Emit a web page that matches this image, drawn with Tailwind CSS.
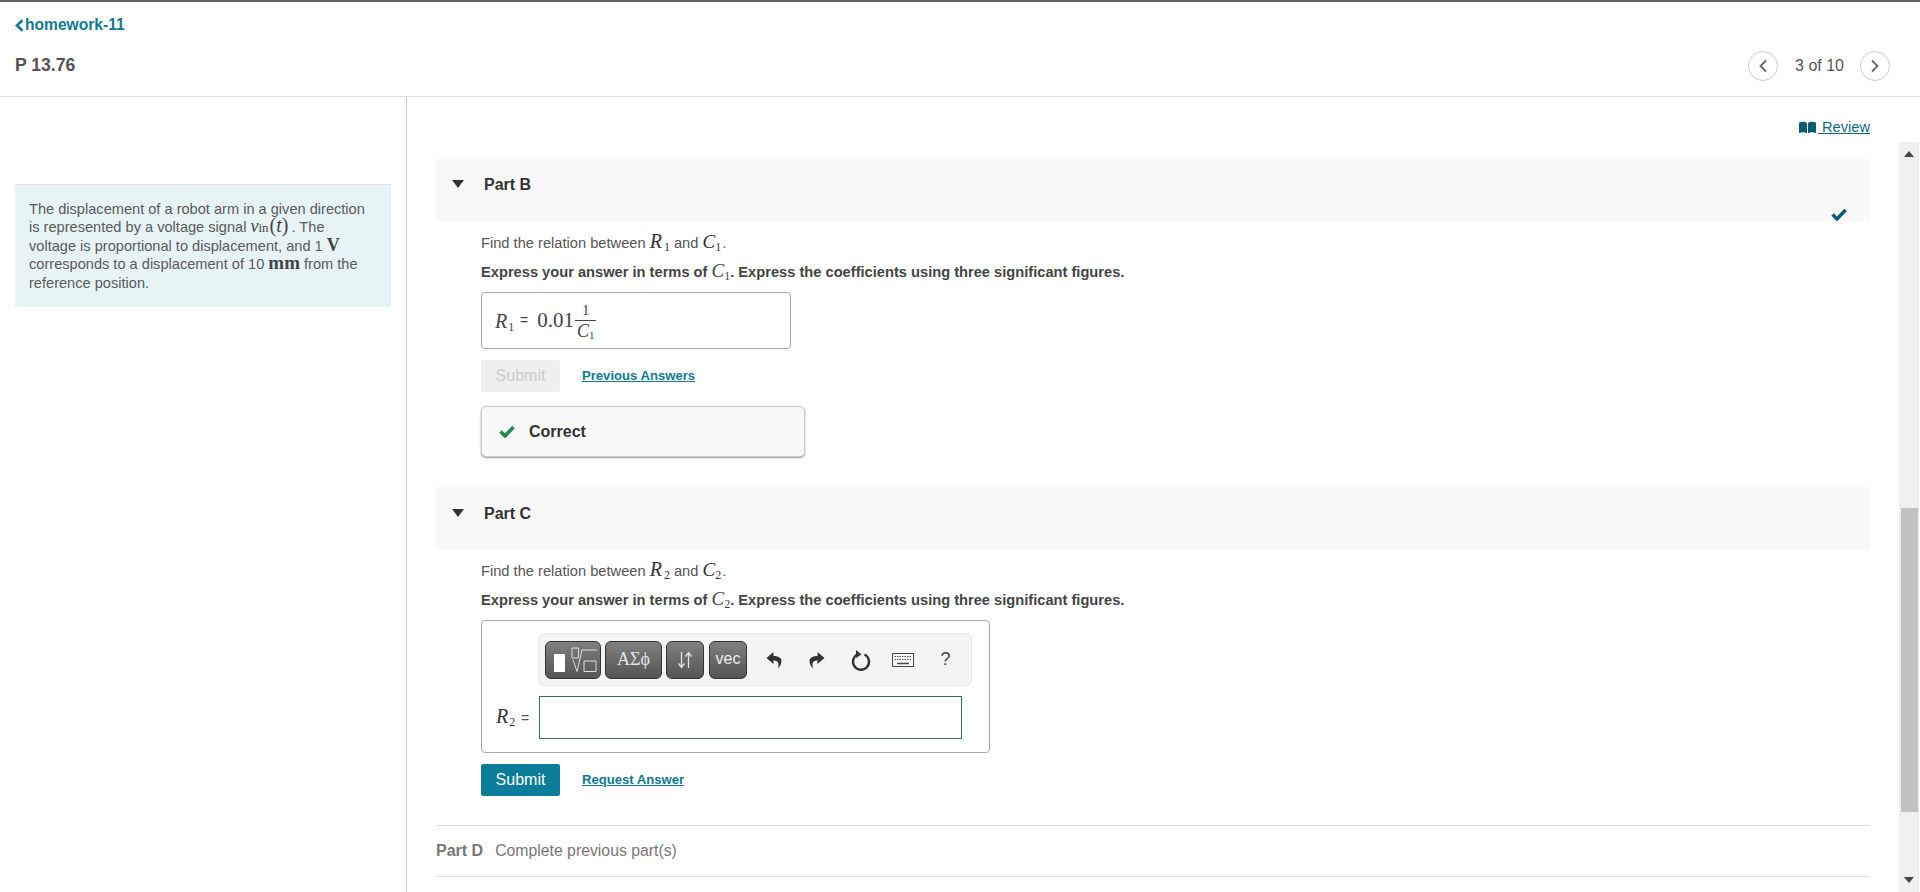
<!DOCTYPE html>
<html lang="en">
<head>
<meta charset="UTF-8" />
<title>P 13.76</title>
<script src="https://cdn.jsdelivr.net/npm/@tailwindcss/browser@4"></script>
</head>
<body class="h-[892px] overflow-hidden bg-white font-['Liberation_Sans',sans-serif] text-[#555]">

<!-- Top bar -->
<header class="h-[97px] border-t-2 border-b border-t-[#666] border-b-[#ddd] flex justify-between">
  <div class="pl-[15px]">
    <a href="#" class="flex items-center h-[16px] mt-[15px] text-[15.6px] font-bold text-[#0f7a90]">
      <svg width="9" height="13" viewBox="0 0 9 13" class="mr-[1px]"><path d="M7.5 1.2 2 6.5l5.5 5.3" fill="none" stroke="#0f7a90" stroke-width="2.6"/></svg>homework-11
    </a>
    <h1 class="mt-[22px] text-[17.6px] leading-[20px] font-bold text-[#555]">P 13.76</h1>
  </div>
  <div class="flex items-center mt-[49px] h-[30px] pr-[30px] text-[16px]">
    <button class="w-[30px] h-[30px] rounded-full border border-[#ccc] flex items-center justify-center">
      <svg width="10" height="14" viewBox="0 0 10 14"><path d="M8 1.5 2.500 7 8 12.500" fill="none" stroke="#666" stroke-width="1.800"/></svg>
    </button>
    <span class="ml-[17px] mr-[16px] text-[#555]">3 of 10</span>
    <button class="w-[30px] h-[30px] rounded-full border border-[#ccc] flex items-center justify-center">
      <svg width="10" height="14" viewBox="0 0 10 14"><path d="M2 1.5 7.500 7 2 12.500" fill="none" stroke="#666" stroke-width="1.800"/></svg>
    </button>
  </div>
</header>

<div class="flex h-[795px]">
  <!-- Intro panel -->
  <aside class="w-[407px] shrink-0 border-r border-[#ccc] pt-[87px] pl-[15px]">
    <div class="w-[376px] h-[123px] bg-[#e6f4f6] border-t border-[#d5e6e9] pl-[14px] pt-[15px] text-[14.6px] leading-[18.4px] text-[#5a5a5a]">
      The displacement of a robot arm in a given direction<br>
      is represented by a voltage signal <span class="font-['Liberation_Serif',serif] text-[18px] leading-[0] text-[#444]"><i>v</i><span class="text-[13px] leading-[0]">in</span><span class="ml-[1px] text-[20px] leading-[0]">(<i>t</i>)</span></span><span class="ml-[3px]">. The</span><br>
      voltage is proportional to displacement, and 1 <span class="font-['Liberation_Serif',serif] text-[18px] leading-[0] font-bold text-[#444]">V</span><br>
      corresponds to a displacement of 10 <span class="font-['Liberation_Serif',serif] text-[19px] leading-[0] font-bold text-[#444]">mm</span> from the<br>
      reference position.
    </div>
  </aside>

  <!-- Parts column -->
  <main class="flex-1 flex">
    <div class="w-[1463px] pl-[29px] shrink-0">
      <div class="h-[62px] flex justify-end pt-[21px]">
        <a href="#" class="flex items-start h-[18px] text-[14.67px] leading-[18px] text-[#0f6a80] underline">
          <svg width="17" height="13" viewBox="0 0 17 13" class="mt-[3px] mr-[2px]"><path d="M0 1.500C3 .5 6 .5 8 2v10.500C6 11 3 11 0 12zM17 1.500C14 .5 11 .5 9 2v10.500C11 11 14 11 17 12z" fill="#0b5b72"/></svg>
          <span>&nbsp;Review</span>
        </a>
      </div>

      <!-- Part B -->
      <section>
        <div class="relative h-[62px] bg-[#f9f9f9] flex pt-[16px] pl-[16px]">
          <svg width="12" height="8" viewBox="0 0 12 8" class="mt-[5px]"><path d="M0 0h12L6 8z" fill="#333"/></svg>
          <h2 class="ml-[20px] text-[16px] leading-[20px] font-bold text-[#333]">Part B</h2>
          <svg width="16" height="13" viewBox="0 0 16 13" class="absolute right-[23px] bottom-[0px]"><path d="M1.500 6.500 6 11l8.500-9" fill="none" stroke="#0b5b72" stroke-width="3.400"/></svg>
        </div>
        <div class="pl-[45px]">
          <p class="mt-[10px] h-[24px] leading-[24px] text-[14.67px] text-[#555]">Find the relation between <span class="font-['Liberation_Serif',serif] text-[20px] leading-[0] text-[#333]"><i>R</i><sub class="ml-[2px] text-[12px]">1</sub></span> and <span class="font-['Liberation_Serif',serif] text-[19px] leading-[0] text-[#333]"><i>C</i><sub class="text-[12px]">1</sub></span><span class="ml-[1px]">.</span></p>
          <p class="mt-[5px] h-[24px] leading-[24px] text-[14.67px] font-bold text-[#444]">Express your answer in terms of <span class="font-['Liberation_Serif',serif] text-[19px] leading-[0] font-normal"><i>C</i><sub class="text-[12px]">1</sub></span>. Express the coefficients using three significant figures.</p>
          <div class="mt-[8px] w-[310px] h-[57px] border border-[#aaa] rounded-[4px] flex items-center pl-[13px] font-['Liberation_Serif',serif] text-[#444]">
            <span class="text-[20px] w-[20px] whitespace-nowrap"><i>R</i><sub class="ml-[1px] text-[12px]">1</sub></span>
            <span class="ml-[5px] font-['Liberation_Sans',sans-serif] text-[14px]">=</span>
            <span class="ml-[9px] text-[21px]">0.01</span>
            <span class="ml-[1px] inline-flex flex-col items-center text-[15px] leading-[19px]">
              <span>1</span>
              <span class="border-t border-[#444] px-[2px] text-[18px] leading-[20px] whitespace-nowrap"><i>C</i><sub class="text-[11px]">1</sub></span>
            </span>
          </div>
          <div class="mt-[11px] flex items-center h-[32px]">
            <button class="w-[79px] h-[32px] bg-[#efefef] rounded-[2px] text-[16px] text-[#ccc]">Submit</button>
            <a href="#" class="ml-[22px] text-[13.1px] font-bold text-[#0f7a90] underline">Previous Answers</a>
          </div>
          <div class="mt-[14px] w-[324px] h-[51px] bg-[#f9f9f9] border border-[#ccc] rounded-[5px] shadow-[0_1px_2px_#999] flex items-center pl-[17px]">
            <svg width="16" height="13" viewBox="0 0 16 13"><path d="M1.500 6.500 6 11l8.500-9" fill="none" stroke="#1f8a4c" stroke-width="3.600"/></svg>
            <span class="ml-[14px] text-[16px] font-bold text-[#333]">Correct</span>
          </div>
        </div>
      </section>

      <!-- Part C -->
      <section class="mt-[30px]">
        <div class="h-[63px] bg-[#f9f9f9] flex pt-[17px] pl-[16px]">
          <svg width="12" height="8" viewBox="0 0 12 8" class="mt-[5px]"><path d="M0 0h12L6 8z" fill="#333"/></svg>
          <h2 class="ml-[20px] text-[16px] leading-[20px] font-bold text-[#333]">Part C</h2>
        </div>
        <div class="pl-[45px]">
          <p class="mt-[9px] h-[24px] leading-[24px] text-[14.67px] text-[#555]">Find the relation between <span class="font-['Liberation_Serif',serif] text-[20px] leading-[0] text-[#333]"><i>R</i><sub class="ml-[2px] text-[12px]">2</sub></span> and <span class="font-['Liberation_Serif',serif] text-[19px] leading-[0] text-[#333]"><i>C</i><sub class="text-[12px]">2</sub></span><span class="ml-[1px]">.</span></p>
          <p class="mt-[5px] h-[24px] leading-[24px] text-[14.67px] font-bold text-[#444]">Express your answer in terms of <span class="font-['Liberation_Serif',serif] text-[19px] leading-[0] font-normal"><i>C</i><sub class="text-[12px]">2</sub></span>. Express the coefficients using three significant figures.</p>

          <div class="mt-[8px] w-[509px] h-[133px] border border-[#aaa] rounded-[4px] pt-[12px]">
            <!-- Equation toolbar -->
            <div class="ml-[56px] w-[434px] h-[53px] bg-[#f4f4f4] border border-[#e8e8e8] rounded-[6px] flex items-center pl-[6px]">
              <button class="w-[56px] h-[38px] rounded-[6px] border border-[#333] bg-gradient-to-b from-[#808080] to-[#555]">
                <svg width="54" height="36" viewBox="0 0 54 36"><path d="M8 12h11v18H8z" fill="#fff"/><path d="M26 6h6.500v10H26zM38 19h12v10.500H38z" fill="none" stroke="#ddd"/><path d="M27 18l4 11.500L36 8h15" fill="none" stroke="#ddd"/></svg>
              </button>
              <button class="ml-[4px] w-[57px] h-[38px] rounded-[6px] border border-[#333] bg-gradient-to-b from-[#808080] to-[#555] font-['Liberation_Serif',serif] text-[18px] text-[#e4e4e4]">ΑΣϕ</button>
              <button class="ml-[4px] w-[38px] h-[38px] rounded-[6px] border border-[#333] bg-gradient-to-b from-[#808080] to-[#555] text-[16px] text-[#e4e4e4]">
                <svg width="18" height="20" viewBox="0 0 18 20" class="mx-auto"><path d="M5.500 2v15M2.500 13.500l3 4 3-4M12.500 18V3M9.500 6.500l3-4 3 4" fill="none" stroke="#e4e4e4" stroke-width="1.300"/></svg>
              </button>
              <button class="ml-[5px] w-[38px] h-[38px] rounded-[6px] border border-[#333] bg-gradient-to-b from-[#808080] to-[#555] text-[16px] text-[#eee] pb-[2px]">vec</button>
              <div class="ml-[5px] flex items-center">
                <span class="w-[43px] flex justify-center"><svg width="16" height="18" viewBox="0 0 16 18"><path d="M7.500 1 0.500 7l7 6V9.500c3 0 5 1 5 4.500 0 1-.3 2.500-.8 3.500 2.500-2 3.800-5 3.800-7.500C15.500 6.500 12 5 7.500 5z" fill="#333"/></svg></span>
                <span class="w-[43px] flex justify-center"><svg width="16" height="18" viewBox="0 0 16 18"><path d="M8.500 1l7 6-7 6V9.500c-3 0-5 1-5 4.500 0 1 .3 2.500.8 3.500C1.800 15.500.5 12.500.5 10 .5 6.500 4 5 8.500 5z" fill="#333"/></svg></span>
                <span class="w-[43px] flex justify-center pl-[2px]"><svg width="20" height="22" viewBox="0 0 20 22"><path d="M6.500 5.500a8 8 0 1 0 7 0" fill="none" stroke="#333" stroke-width="2.400"/><path d="M5 1l5.500 4.500L5 9z" fill="#333"/></svg></span>
                <span class="w-[43px] flex justify-center"><svg width="22" height="14" viewBox="0 0 22 14"><rect x="0.500" y="0.500" width="21" height="13" fill="#f8f8f8" stroke="#444"/><path d="M2.500 3.500h17M2.500 6.500h17" stroke="#555" stroke-dasharray="1.500 1" /><path d="M5 10.500h12" stroke="#444" stroke-width="1.500"/></svg></span>
                <span class="w-[43px] text-center text-[18px] text-[#444]">?</span>
              </div>
            </div>
            <div class="mt-[10px] flex items-center">
              <span class="w-[57px] pl-[14px] pb-[3px] font-['Liberation_Serif',serif] text-[20px] text-[#333] whitespace-nowrap"><span class="inline-block w-[25px]"><i>R</i><sub class="ml-[1px] text-[12px]">2</sub></span><span class="font-['Liberation_Sans',sans-serif] text-[14px] text-[#555]">=</span></span>
              <input type="text" class="w-[423px] h-[43px] border border-[#2f6a7d] bg-white" />
            </div>
          </div>

          <div class="mt-[11px] flex items-center h-[32px]">
            <button class="w-[79px] h-[32px] bg-[#0b7c9a] rounded-[2px] text-[16px] text-white">Submit</button>
            <a href="#" class="ml-[22px] text-[13.1px] font-bold text-[#0f7a90] underline">Request Answer</a>
          </div>
        </div>
      </section>

      <!-- Part D -->
      <div class="mt-[29px] h-[52px] border-t border-b border-[#ddd] flex items-center text-[16px] text-[#777]">
        <span class="font-bold">Part D</span>
        <span class="ml-[12px] text-[15.8px]">Complete previous part(s)</span>
      </div>
    </div>

    <!-- Scrollbar -->
    <div class="ml-[29px] mt-[45px] w-[20px] h-[750px] bg-[#f0f0f0] flex flex-col items-center">
      <div class="h-[24px] flex items-center"><svg width="10" height="6" viewBox="0 0 10 6"><path d="M0 6h10L5 0z" fill="#444"/></svg></div>
      <div class="mt-[342px] w-[17px] h-[304px] bg-[#c1c1c1]"></div>
      <div class="mt-[56px] h-[24px] flex items-center"><svg width="10" height="6" viewBox="0 0 10 6"><path d="M0 0h10L5 6z" fill="#444"/></svg></div>
    </div>
  </main>
</div>
</body>
</html>
